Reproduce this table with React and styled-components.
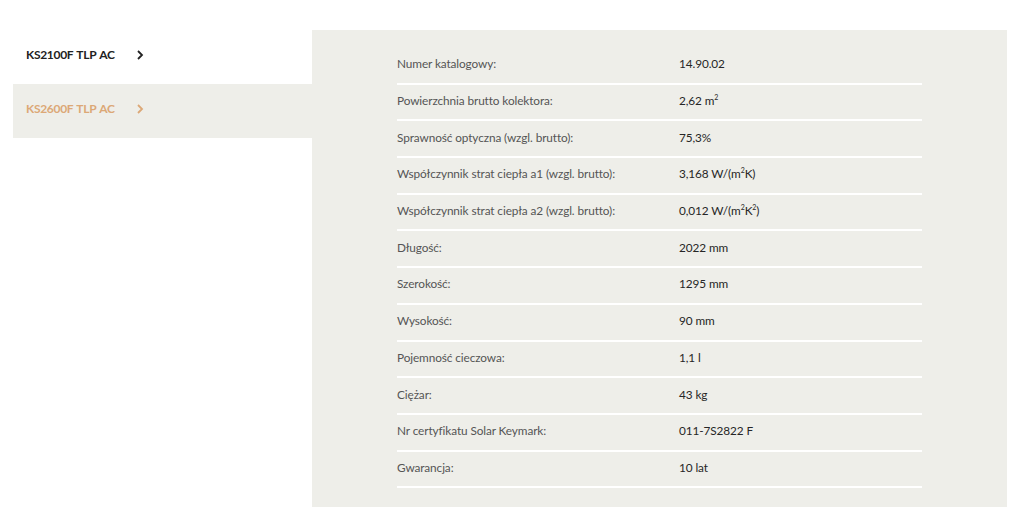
import React from "react";
import styled, {createGlobalStyle} from "styled-components";

const GlobalStyle = createGlobalStyle`
  html, body {
    margin: 0;
    padding: 0;
    background: #ffffff;
    font-family: Lato, "Open Sans", sans-serif;
  }
`;

const Page = styled.div`
  display: flex;
  align-items: flex-start;
  padding: 30px 0 0 13px;
  width: 1024px;
  height: 523px;
  box-sizing: border-box;
`;

const Sidebar = styled.div`
  width: 299px;
  display: flex;
  flex-direction: column;
`;

const Tab = styled.div`
  display: flex;
  align-items: center;
  height: 54px;
  padding: 0 0 5px 13px;
  box-sizing: border-box;
  background: ${p => (p.active ? "#eeeee9" : "#ffffff")};
  color: ${p => (p.active ? "#dca877" : "#222222")};
  font-size: 12px;
  font-weight: 700;
  letter-spacing: -0.3px;
  word-spacing: 1px;
`;

const TabLabel = styled.span`
  width: 110px;
`;

const Chevron = styled.svg`
  width: 8px;
  height: 10px;
`;

const Panel = styled.div`
  width: 695px;
  height: 477px;
  background: #eeeee9;
  padding: 18px 0 0 85px;
  box-sizing: border-box;
`;

const Table = styled.div`
  width: 525px;
  display: flex;
  flex-direction: column;
`;

const Row = styled.div`
  display: flex;
  align-items: center;
  height: 36.7px;
  padding-bottom: 3px;
  border-bottom: 2px solid #ffffff;
  box-sizing: border-box;
  font-size: 11.8px;
  letter-spacing: -0.1px;
`;

const Label = styled.div`
  width: 282px;
  color: #555555;
`;

const Value = styled.div`
  color: #262626;
`;

const Sup = styled.sup`
  font-size: 7px;
  line-height: 0;
  vertical-align: 5px;
`;

const specs = [
    ["Numer katalogowy:", "14.90.02"],
    ["Powierzchnia brutto kolektora:", <>2,62 m<Sup>2</Sup></>],
    ["Sprawność optyczna (wzgl. brutto):", "75,3%"],
    ["Współczynnik strat ciepła a1 (wzgl. brutto):", <>3,168 W/(m<Sup>2</Sup>K)</>],
    ["Współczynnik strat ciepła a2 (wzgl. brutto):", <>0,012 W/(m<Sup>2</Sup>K<Sup>2</Sup>)</>],
    ["Długość:", "2022 mm"],
    ["Szerokość:", "1295 mm"],
    ["Wysokość:", "90 mm"],
    ["Pojemność cieczowa:", "1,1 l"],
    ["Ciężar:", "43 kg"],
    ["Nr certyfikatu Solar Keymark:", "011-7S2822 F"],
    ["Gwarancja:", "10 lat"],
];

const tabs = [
    {name: "KS2100F TLP AC", active: false},
    {name: "KS2600F TLP AC", active: true},
];

function App() {
    return (
        <>
            <GlobalStyle/>
            <Page>
                <Sidebar>
                    {tabs.map(t => (
                        <Tab key={t.name} active={t.active}>
                            <TabLabel>{t.name}</TabLabel>
                            <Chevron viewBox="0 0 8 10">
                                <path d="M2 1 L6 5 L2 9" fill="none" stroke="currentColor" strokeWidth="1.8"/>
                            </Chevron>
                        </Tab>
                    ))}
                </Sidebar>
                <Panel>
                    <Table>
                        {specs.map(([label, value], i) => (
                            <Row key={i}>
                                <Label>{label}</Label>
                                <Value>{value}</Value>
                            </Row>
                        ))}
                    </Table>
                </Panel>
            </Page>
        </>
    );
}

export default App;
